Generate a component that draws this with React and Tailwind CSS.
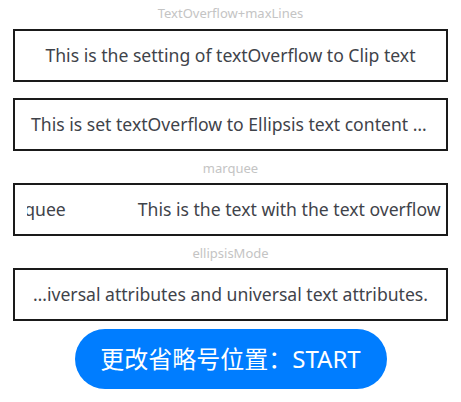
export default function App() {
  const box = 'mx-[13px] h-[53px] border-2 border-[#1a1a1a] flex items-center overflow-hidden whitespace-nowrap text-[17.6px]'
  const label = 'h-[16px] leading-[16px] text-center text-[13px] text-[#c4c4c4]'
  return (
    <div className="w-[461px] h-[402px] bg-white flex flex-col text-[#3f434a]" style={{ fontFamily: '"Noto Sans", "Noto Sans CJK SC", sans-serif' }}>
      <div className={`${label} mt-[5px]`}>TextOverflow+maxLines</div>

      {/* Clip */}
      <div className={`${box} mt-[8px] justify-center px-[14px]`}>
        <span>This is the setting of textOverflow to Clip text</span>
      </div>

      {/* Ellipsis */}
      <div className={`${box} mt-[16px] px-[16px]`}>
        <span>This is set textOverflow to Ellipsis text content …</span>
      </div>

      <div className={`${label} mt-[9px]`}>marquee</div>

      {/* Marquee */}
      <div className={`${box} mt-[7px] pl-[12px] pr-[1px]`}>
        <div className="w-full overflow-hidden">
          <div className="flex whitespace-nowrap ml-[-36px]">
            <span>marquee</span>
            <span className="ml-[72px]">This is the text with the text overflow set marquee</span>
          </div>
        </div>
      </div>

      <div className={`${label} mt-[9px]`}>ellipsisMode</div>

      {/* Ellipsis START */}
      <div className={`${box} mt-[7px] justify-end pl-[19px] pr-[18px]`}>
        <span>…iversal attributes and universal text attributes.</span>
      </div>

      <div className="flex justify-center mt-[8px]">
        <button className="w-[312px] h-[60px] rounded-full bg-[#007dff] text-white text-[24px] flex items-center justify-center">
          更改省略号位置：START
        </button>
      </div>
    </div>
  )
}
